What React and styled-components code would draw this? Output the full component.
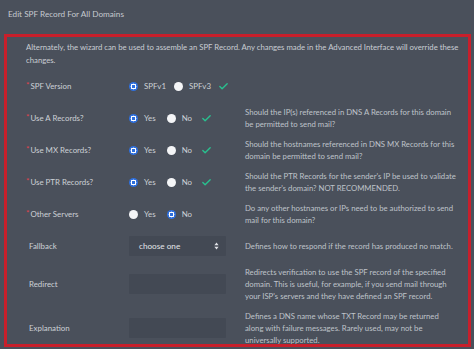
import React from 'react'
import styled, { createGlobalStyle } from 'styled-components'
import { Check } from 'lucide-react'

const Global = createGlobalStyle`
  html, body {
    margin: 0;
    padding: 0;
    background: #4a505b;
  }
  body {
    font-family: "Lato", "Liberation Sans", sans-serif;
    color: #d4d7dc;
    overflow: hidden;
  }
`

const Page = styled.div`
  width: 474px;
  height: 349px;
  background: #4a505b;
`

const Title = styled.div`
  padding: 8px 8px 0 8px;
  font-size: 8.2px;
  line-height: 12px;
  color: #c5c9cf;
`

const Frame = styled.div`
  margin: 14px 3px 0 4px;
  border: 3px solid #c81f2b;
  height: 313px;
  box-sizing: border-box;
  padding: 4px 12px 0 19px;
`

const Intro = styled.p`
  margin: 0 0 7px 0;
  font-size: 7.75px;
  line-height: 13px;
  color: #c9cdd3;
  margin-right: -4px;
`

const Form = styled.div`
  display: grid;
  grid-template-columns: 101px 118px 1fr;
  row-gap: 8px;
  align-items: center;
`

const Label = styled.div`
  font-size: 7.9px;
  color: #cdd0d6;
  padding-left: ${p => (p.$required ? '0' : '3px')};
  min-height: 24px;
  display: flex;
  align-items: center;
`

const Star = styled.span`
  color: #e2434e;
  font-size: 8px;
  margin-right: 1px;
  position: relative;
  top: -1px;
`

const Control = styled.div`
  display: flex;
  align-items: center;
  min-height: 24px;
  padding-left: 2px;
`

const Option = styled.label`
  display: flex;
  align-items: center;
  font-size: 7.9px;
  color: #cdd0d6;
  margin-right: ${p => p.$gap}px;
`

const Dot = styled.span`
  width: 9px;
  height: 9px;
  border-radius: 50%;
  margin-right: 6px;
  flex: none;
  background: ${p =>
    p.$on
      ? 'radial-gradient(circle, #2e6fdd 0 1.6px, #ffffff 1.9px 2.8px, #2e6fdd 3.1px)'
      : '#f4f5f7'};
`

const Tick = styled(Check)`
  color: #29c08f;
  flex: none;
`

const Desc = styled.div`
  font-size: 7.75px;
  line-height: 12px;
  color: #bfc3ca;
`

const Field = styled.div`
  width: 97px;
  height: 20px;
  background: #434954;
  border-radius: 1px;
  box-sizing: border-box;
  display: flex;
  align-items: center;
  justify-content: space-between;
  padding: 0 7px 0 10px;
  font-size: 8.2px;
  color: #e2e4e8;
`

const Arrows = () => (
  <svg width="5" height="8" viewBox="0 0 5 8">
    <path d="M2.5 0.5 L4.6 3.2 L0.4 3.2 Z" fill="#e2e4e8" />
    <path d="M2.5 7.5 L4.6 4.8 L0.4 4.8 Z" fill="#e2e4e8" />
  </svg>
)

const rows = [
  {
    label: 'Use A Records?',
    desc: 'Should the IP(s) referenced in DNS A Records for this domain be permitted to send mail?',
    value: 'Yes',
    tick: true,
  },
  {
    label: 'Use MX Records?',
    desc: 'Should the hostnames referenced in DNS MX Records for this domain be permitted to send mail?',
    value: 'Yes',
    tick: true,
  },
  {
    label: 'Use PTR Records?',
    desc: "Should the PTR Records for the sender's IP be used to validate the sender's domain? NOT RECOMMENDED.",
    value: 'Yes',
    tick: true,
  },
  {
    label: 'Other Servers',
    desc: 'Do any other hostnames or IPs need to be authorized to send mail for this domain?',
    value: 'No',
    tick: false,
  },
]

const App = () => {
  return (
    <Page>
      <Global />
      <Title>Edit SPF Record For All Domains</Title>
      <Frame>
        <Intro>
          Alternately, the wizard can be used to assemble an SPF Record. Any changes made in the
          Advanced Interface will override these changes.
        </Intro>
        <Form>
          <Label $required>
            <Star>*</Star>SPF Version
          </Label>
          <Control>
            <Option $gap={8}>
              <Dot $on />
              SPFv1
            </Option>
            <Option $gap={7}>
              <Dot />
              SPFv3
            </Option>
            <Tick size={11} strokeWidth={3} />
          </Control>
          <Desc />

          {rows.map(r => (
            <React.Fragment key={r.label}>
              <Label $required>
                <Star>*</Star>
                {r.label}
              </Label>
              <Control>
                <Option $gap={11}>
                  <Dot $on={r.value === 'Yes'} />
                  Yes
                </Option>
                <Option $gap={9}>
                  <Dot $on={r.value === 'No'} />
                  No
                </Option>
                {r.tick && <Tick size={11} strokeWidth={3} />}
              </Control>
              <Desc>{r.desc}</Desc>
            </React.Fragment>
          ))}

          <Label>Fallback</Label>
          <Control>
            <Field>
              choose one
              <Arrows />
            </Field>
          </Control>
          <Desc>Defines how to respond if the record has produced no match.</Desc>

          <Label>Redirect</Label>
          <Control>
            <Field />
          </Control>
          <Desc>
            Redirects verification to use the SPF record of the specified domain. This is useful,
            for example, if you send mail through your ISP's servers and they have defined an SPF
            record.
          </Desc>

          <Label>Explanation</Label>
          <Control>
            <Field />
          </Control>
          <Desc>
            Defines a DNS name whose TXT Record may be returned along with failure messages. Rarely
            used, may not be universally supported.
          </Desc>
        </Form>
      </Frame>
    </Page>
  )
}

export default App
